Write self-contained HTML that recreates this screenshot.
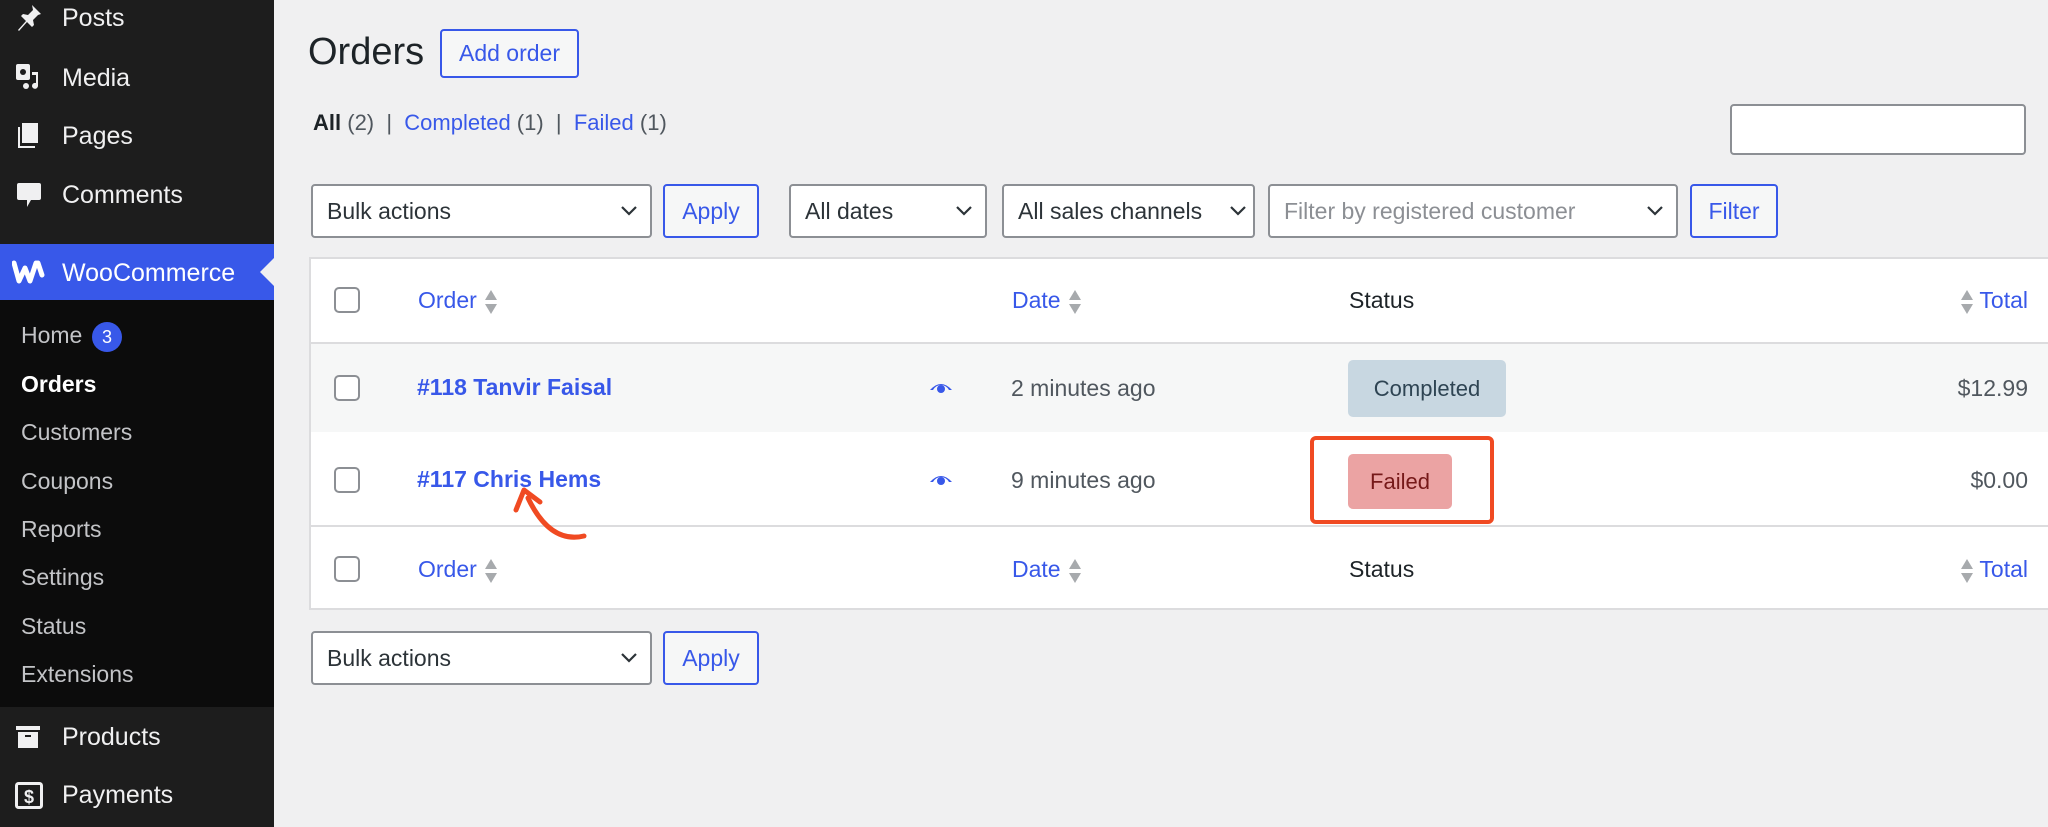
<!DOCTYPE html>
<html><head><meta charset="utf-8"><style>
*{box-sizing:border-box;margin:0;padding:0}
body{width:2048px;height:827px;overflow:hidden;background:#f0f0f1;font-family:"Liberation Sans",sans-serif;position:relative;color:#1d2327}
.abs{position:absolute}
#side{left:0;top:0;width:274px;height:827px;background:#1d1d1d}
#sub{left:0;top:300px;width:274px;height:407px;background:#0c0c0c}
#woo{left:0;top:244px;width:274px;height:56px;background:#3858e9}
.mi{position:absolute;left:62px;color:#f0f0f1;font-size:25px;line-height:30px}
.si{position:absolute;left:21px;color:#c3c4c7;font-size:23px;line-height:28px}
.ic{position:absolute;left:14px;width:30px;height:30px}
.btn{position:absolute;border:2px solid #3858e9;background:#f6f7f7;color:#3858e9;border-radius:4px;font-size:23px;display:flex;align-items:center;justify-content:center}
.sel{position:absolute;border:2px solid #8c8f94;background:#fff;border-radius:4px;font-size:23px;display:flex;align-items:center;padding-left:14px;color:#2c3338}
.sel svg{position:absolute;right:12px;top:50%;margin-top:-6px}
.t{position:absolute;font-size:23px;line-height:28px}
.blue{color:#3858e9}
.cb{position:absolute;left:334px;width:26px;height:26px;border:2px solid #8c8f94;border-radius:5px;background:#fff}
.sort{display:inline-block;vertical-align:middle;margin-left:8px}
</style></head><body>
<div id="side" class="abs"></div>
<div id="sub" class="abs"></div>
<div id="woo" class="abs"></div>
<div class="abs" style="left:260px;top:258px;width:0;height:0;border-top:14px solid transparent;border-bottom:14px solid transparent;border-right:14px solid #f0f0f1"></div>

<svg class="ic" style="top:3px" viewBox="0 0 30 30"><path d="M18 2l9 9-3 1-5 5 1 5-2 2-5-5-8 9-1-1 8-9-5-5 2-2 5 1 5-5z" fill="#f0f0f1"/></svg>
<div class="mi" style="top:3px">Posts</div>
<svg class="ic" style="top:62px" viewBox="0 0 30 30"><rect x="2" y="2" width="14" height="16" rx="2" fill="#f0f0f1"/><circle cx="9" cy="10" r="3" fill="#1d1d1d"/><path d="M18 10h6v14a3 3 0 1 1-2-3V13h-4z" fill="#f0f0f1"/><circle cx="12" cy="24" r="3" fill="#f0f0f1"/></svg>
<div class="mi" style="top:63px">Media</div>
<svg class="ic" style="top:120px" viewBox="0 0 30 30"><rect x="8" y="3" width="16" height="20" fill="#f0f0f1"/><path d="M4 7v21h17v-2H6V7z" fill="#f0f0f1"/></svg>
<div class="mi" style="top:121px">Pages</div>
<svg class="ic" style="top:180px" viewBox="0 0 30 30"><path d="M5 3h20a2 2 0 0 1 2 2v13a2 2 0 0 1-2 2h-8l-4 7v-7H5a2 2 0 0 1-2-2V5a2 2 0 0 1 2-2z" fill="#f0f0f1"/></svg>
<div class="mi" style="top:180px">Comments</div>
<svg class="abs" style="left:12px;top:260px" width="36" height="24" viewBox="0 0 36 24"><path d="M2 3l5 18 6-13 5 13 6-18" fill="none" stroke="#fff" stroke-width="5" stroke-linejoin="round" stroke-linecap="round"/><path d="M26 3l4 12" stroke="#fff" stroke-width="5" stroke-linecap="round"/></svg>
<div class="mi" style="top:258px;color:#fff">WooCommerce</div>

<div class="si" style="top:321px">Home</div>
<div class="abs" style="left:92px;top:322px;width:30px;height:30px;border-radius:15px;background:#3858e9;color:#fff;font-size:18px;text-align:center;line-height:30px">3</div>
<div class="si" style="top:370px;color:#fff;font-weight:bold">Orders</div>
<div class="si" style="top:418px">Customers</div>
<div class="si" style="top:467px">Coupons</div>
<div class="si" style="top:515px">Reports</div>
<div class="si" style="top:563px">Settings</div>
<div class="si" style="top:612px">Status</div>
<div class="si" style="top:660px">Extensions</div>

<svg class="ic" style="top:722px" viewBox="0 0 30 30"><rect x="2" y="4" width="24" height="4" fill="#f0f0f1"/><rect x="4" y="10" width="20" height="16" fill="#f0f0f1"/><rect x="11" y="13" width="6" height="2" fill="#1d1d1d"/></svg>
<div class="mi" style="top:722px">Products</div>
<svg class="ic" style="top:780px" viewBox="0 0 30 30"><rect x="2.5" y="3.5" width="25" height="24" rx="2" fill="none" stroke="#f0f0f1" stroke-width="3"/><text x="15" y="23" fill="#f0f0f1" font-size="18" font-weight="bold" text-anchor="middle" font-family="Liberation Sans">$</text></svg>
<div class="mi" style="top:780px">Payments</div>

<!-- main -->
<div class="abs" style="left:308px;top:30px;font-size:38px;line-height:44px;color:#1d2327">Orders</div>
<div class="btn" style="left:440px;top:29px;width:139px;height:49px">Add order</div>
<div class="t" style="left:313px;top:109px;color:#50575e;font-size:22px"><b style="color:#1d2327;font-weight:bold">All</b> (2) &nbsp;| &nbsp;<span class="blue">Completed</span> (1) &nbsp;| &nbsp;<span class="blue">Failed</span> (1)</div>
<div class="abs" style="left:1730px;top:104px;width:296px;height:51px;background:#fff;border:2px solid #8c8f94;border-radius:4px"></div>

<div class="sel" style="left:311px;top:184px;width:341px;height:54px">Bulk actions<svg width="18" height="12" viewBox="0 0 18 12"><path d="M2 2l7 7 7-7" fill="none" stroke="#2c3338" stroke-width="2.2"/></svg></div>
<div class="btn" style="left:663px;top:184px;width:96px;height:54px">Apply</div>
<div class="sel" style="left:789px;top:184px;width:198px;height:54px">All dates<svg width="18" height="12" viewBox="0 0 18 12"><path d="M2 2l7 7 7-7" fill="none" stroke="#2c3338" stroke-width="2.2"/></svg></div>
<div class="sel" style="left:1002px;top:184px;width:253px;height:54px">All sales channels<svg width="18" height="12" viewBox="0 0 18 12" style="right:6px"><path d="M2 2l7 7 7-7" fill="none" stroke="#2c3338" stroke-width="2.2"/></svg></div>
<div class="sel" style="left:1268px;top:184px;width:410px;height:54px;color:#8c8f94">Filter by registered customer<svg width="18" height="12" viewBox="0 0 18 12"><path d="M2 2l7 7 7-7" fill="none" stroke="#2c3338" stroke-width="2.2"/></svg></div>
<div class="btn" style="left:1690px;top:184px;width:88px;height:54px">Filter</div>

<!-- table -->
<div class="abs" style="left:309px;top:257px;width:1745px;height:353px;background:#fff;border:2px solid #dcdcde"></div>
<div class="abs" style="left:311px;top:342px;width:1737px;height:2px;background:#dcdcde"></div>
<div class="abs" style="left:311px;top:344px;width:1737px;height:88px;background:#f6f7f7"></div>
<div class="abs" style="left:311px;top:525px;width:1737px;height:2px;background:#dcdcde"></div>

<div class="cb" style="top:287px"></div>
<div class="cb" style="top:375px"></div>
<div class="cb" style="top:467px"></div>
<div class="cb" style="top:556px"></div>

<svg width="0" height="0" style="position:absolute"><defs><g id="ar"><path d="M0 10L6 0 12 10z" fill="#a7aaad"/><path d="M0 14L6 24 12 14z" fill="#a7aaad"/></g></defs></svg>

<div class="t blue" style="left:418px;top:286px">Order<svg class="sort" width="12" height="24"><use href="#ar"/></svg></div>
<div class="t blue" style="left:1012px;top:286px">Date<svg class="sort" width="12" height="24"><use href="#ar"/></svg></div>
<div class="t" style="left:1349px;top:286px">Status</div>
<div class="t blue" style="right:20px;top:286px"><svg class="sort" width="12" height="24" style="margin:0 6px 0 0"><use href="#ar"/></svg>Total</div>

<div class="t blue" style="left:417px;top:373px;font-weight:bold">#118 Tanvir Faisal</div>
<div class="t blue" style="left:417px;top:465px;font-weight:bold">#117 Chris Hems</div>
<svg class="abs" style="left:929px;top:380px" width="24" height="16" viewBox="0 0 24 16"><path d="M1 10Q12-2 23 10L20 10Q17 5 12 5T4 10z" fill="#3858e9"/><circle cx="12" cy="9" r="4" fill="#3858e9"/></svg>
<svg class="abs" style="left:929px;top:472px" width="24" height="16" viewBox="0 0 24 16"><path d="M1 10Q12-2 23 10L20 10Q17 5 12 5T4 10z" fill="#3858e9"/><circle cx="12" cy="9" r="4" fill="#3858e9"/></svg>
<div class="t" style="left:1011px;top:374px;color:#50575e">2 minutes ago</div>
<div class="t" style="left:1011px;top:466px;color:#50575e">9 minutes ago</div>

<div class="abs" style="left:1348px;top:360px;width:158px;height:57px;background:#c8d7e1;border-radius:5px;color:#2e4453;font-size:22px;display:flex;align-items:center;justify-content:center">Completed</div>
<div class="abs" style="left:1310px;top:436px;width:184px;height:88px;border:4px solid #f04a22;border-radius:6px"></div>
<div class="abs" style="left:1348px;top:454px;width:104px;height:55px;background:#eba3a3;border-radius:5px;color:#761919;font-size:22px;display:flex;align-items:center;justify-content:center">Failed</div>

<div class="t" style="right:20px;top:374px;color:#50575e">$12.99</div>
<div class="t" style="right:20px;top:466px;color:#50575e">$0.00</div>

<svg class="abs" style="left:500px;top:480px" width="100" height="70" viewBox="0 0 100 70"><path d="M84 56Q50 64 28 18" fill="none" stroke="#f04a22" stroke-width="5" stroke-linecap="round"/><path d="M16 30L24 10 40 22" fill="none" stroke="#f04a22" stroke-width="5" stroke-linecap="round" stroke-linejoin="round"/></svg>

<div class="t blue" style="left:418px;top:555px">Order<svg class="sort" width="12" height="24"><use href="#ar"/></svg></div>
<div class="t blue" style="left:1012px;top:555px">Date<svg class="sort" width="12" height="24"><use href="#ar"/></svg></div>
<div class="t" style="left:1349px;top:555px">Status</div>
<div class="t blue" style="right:20px;top:555px"><svg class="sort" width="12" height="24" style="margin:0 6px 0 0"><use href="#ar"/></svg>Total</div>

<div class="sel" style="left:311px;top:631px;width:341px;height:54px">Bulk actions<svg width="18" height="12" viewBox="0 0 18 12"><path d="M2 2l7 7 7-7" fill="none" stroke="#2c3338" stroke-width="2.2"/></svg></div>
<div class="btn" style="left:663px;top:631px;width:96px;height:54px">Apply</div>
</body></html>
